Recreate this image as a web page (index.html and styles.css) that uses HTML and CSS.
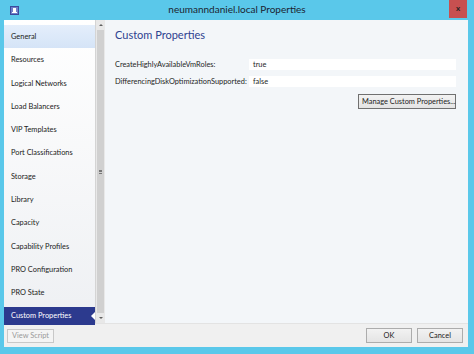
FILE: index.html
```html
<!DOCTYPE html>
<html lang="en">
<head>
  <meta charset="UTF-8">
  <title>neumanndaniel.local Properties</title>
  <link rel="stylesheet" href="styles.css">
</head>
<body>
  <div class="window">
    <div class="titlebar">
      <svg class="app-icon" width="9" height="9" viewBox="0 0 9 9">
        <rect x="0" y="0" width="9" height="9" fill="#3b4a9c"/>
        <rect x="1" y="1" width="7" height="7" fill="#6f7fc8"/>
        <rect x="3" y="2" width="3" height="4" fill="#fff"/>
        <rect x="2" y="6" width="5" height="1" fill="#fff"/>
      </svg>
      <span class="title">neumanndaniel.local Properties</span>
      <div class="close">x</div>
    </div>

    <div class="body">
      <div class="sidebar">
        <ul class="nav">
          <li class="hover">General</li>
          <li>Resources</li>
          <li>Logical Networks</li>
          <li>Load Balancers</li>
          <li>VIP Templates</li>
          <li>Port Classifications</li>
          <li>Storage</li>
          <li>Library</li>
          <li>Capacity</li>
          <li>Capability Profiles</li>
          <li>PRO Configuration</li>
          <li>PRO State</li>
          <li class="selected">Custom Properties</li>
        </ul>
        <div class="scrollbar">
          <div class="arrow up"></div>
          <div class="thumb"><span class="grip"></span></div>
          <div class="arrow down"></div>
        </div>
      </div>

      <div class="content">
        <h2>Custom Properties</h2>
        <div class="prop-grid">
          <label>CreateHighlyAvailableVmRoles:</label>
          <div class="field">true</div>
          <label>DifferencingDiskOptimizationSupported:</label>
          <div class="field">false</div>
        </div>
        <div class="actions">
          <button class="btn manage">Manage Custom Properties...</button>
        </div>
      </div>
    </div>

    <div class="footer">
      <button class="btn disabled">View Script</button>
      <div class="footer-right">
        <button class="btn">OK</button>
        <button class="btn">Cancel</button>
      </div>
    </div>
  </div>
</body>
</html>
```

FILE: styles.css
```css
* {
  box-sizing: border-box;
}
body {
  margin: 0;
  font-family: Lato, "Liberation Sans", sans-serif;
  font-size: 7.4px;
  color: #1e1e1e;
  background: #5ac8ea;
}
.window {
  width: 474px;
  height: 354px;
  background: #5ac8ea;
  display: flex;
  flex-direction: column;
  padding: 0 6px 7px 4px;
}
.titlebar {
  height: 20px;
  display: flex;
  align-items: center;
  position: relative;
  margin-left: -4px;
  margin-right: -6px;
  padding-left: 10px;
}
.app-icon {
  flex: none;
}
.title {
  position: absolute;
  left: 0;
  right: 0;
  text-align: center;
  font-size: 10px;
  color: #1c2430;
  top: 3px;
}
.close {
  position: absolute;
  right: 7px;
  top: 0;
  width: 18px;
  height: 18px;
  background: #c75050;
  color: #222;
  font-weight: bold;
  font-size: 8px;
  text-align: center;
  line-height: 17px;
}
.body {
  flex: 1;
  display: flex;
  min-height: 0;
}
.sidebar {
  width: 101px;
  display: flex;
  background: #f7f8fa;
}
.nav {
  list-style: none;
  margin: 0;
  padding: 5px 0 0;
  width: 91px;
  background: linear-gradient(#ffffff, #eef0f3);
}
.nav li {
  height: 23.3px;
  line-height: 23px;
  padding-left: 7px;
  white-space: nowrap;
  color: #222;
}
.nav li.hover {
  background: linear-gradient(#e4eefb, #d5e4f7);
}
.nav li.selected {
  background: #2c3a8e;
  color: #fff;
  position: relative;
  height: 18px;
  line-height: 18px;
  margin-top: 2px;
}
.nav li.selected::after {
  content: "";
  position: absolute;
  right: 0;
  top: 5px;
  border-style: solid;
  border-width: 4px 4px 4px 0;
  border-color: transparent #ffffff transparent transparent;
}
.scrollbar {
  width: 10px;
  background: #e8e8e8;
  border-left: 1px solid #d4d4d4;
  display: flex;
  flex-direction: column;
  align-items: center;
}
.arrow {
  height: 10px;
  width: 100%;
  position: relative;
}
.arrow::after {
  content: "";
  position: absolute;
  left: 3px;
  top: 4px;
  border-style: solid;
  border-color: transparent;
}
.arrow.up::after {
  border-width: 0 2px 2px 2px;
  border-bottom-color: #606060;
}
.arrow.down::after {
  border-width: 2px 2px 0 2px;
  border-top-color: #606060;
}
.thumb {
  flex: 1;
  width: 7px;
  background: #d0d0d0;
  display: flex;
  align-items: center;
  justify-content: center;
}
.grip {
  width: 3px;
  height: 4px;
  border-top: 1px solid #777;
  border-bottom: 1px solid #777;
  position: relative;
}
.grip::after {
  content: "";
  position: absolute;
  left: 0;
  right: 0;
  top: 0.5px;
  border-top: 1px solid #777;
}
.content {
  flex: 1;
  background: #f3f6f9;
  padding: 8px 10px 0 10px;
}
.content h2 {
  margin: 0 0 18px;
  font-weight: normal;
  font-size: 11px;
  color: #2e4290;
}
.prop-grid {
  display: grid;
  grid-template-columns: 134px 1fr;
  row-gap: 6px;
  align-items: center;
}
.prop-grid label {
  white-space: nowrap;
}
.field {
  height: 11px;
  line-height: 11px;
  background: #fff;
  padding-left: 4px;
  margin-right: 2px;
}
.actions {
  display: flex;
  justify-content: flex-end;
  margin-top: 7px;
  padding-right: 2px;
}
.btn {
  font-family: inherit;
  font-size: 7.4px;
  color: #222;
  background: linear-gradient(#f2f2f2, #e4e4e4);
  border: 1px solid #acacac;
  height: 15px;
  padding: 0 3px;
  line-height: 12px;
  white-space: nowrap;
}
.btn.manage {
  width: 98px;
  border-color: #707070;
}
.footer {
  height: 24px;
  background: #f0f0f0;
  display: flex;
  align-items: center;
  justify-content: space-between;
  padding: 0 5px 0 3px;
  border-top: 1px solid #e3e3e3;
}
.btn.disabled {
  color: #9a9a9a;
  background: #f4f4f4;
  border-color: #c8c8c8;
  width: 47px;
  height: 14px;
}
.footer-right {
  display: flex;
  gap: 5px;
}
.footer-right .btn {
  width: 46px;
}
```
